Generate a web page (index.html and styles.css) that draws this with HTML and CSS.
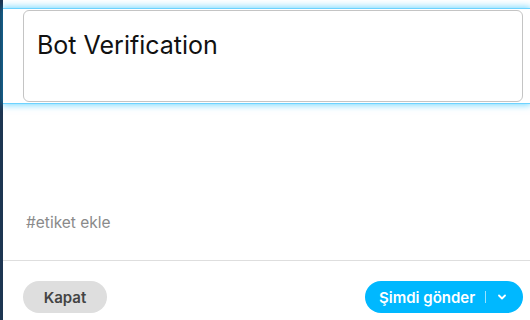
FILE: index.html
```html
<!DOCTYPE html>
<html lang="tr">
<head>
<meta charset="utf-8">
<link rel="stylesheet" href="styles.css">
</head>
<body>
<div class="strip"></div>
<div class="panel">
  <div class="focus-band">
    <div class="title-box">Bot Verification</div>
  </div>
  <div class="body-space"></div>
  <div class="tags">#etiket ekle</div>
  <div class="footer">
    <button class="btn btn-close">Kapat</button>
    <button class="btn btn-post">
      <span class="post-label">Şimdi gönder</span>
      <span class="sep"></span>
      <svg class="chev" width="8" height="6" viewBox="0 0 8 6"><path d="M1 1.5 L4 4.5 L7 1.5" fill="none" stroke="#fff" stroke-width="1.8" stroke-linecap="round" stroke-linejoin="round"/></svg>
    </button>
  </div>
</div>
</body>
</html>
```
FILE: styles.css
```css
html, body {
  margin: 0;
  padding: 0;
  width: 530px;
  height: 320px;
  overflow: hidden;
  background: #fff;
}
body {
  display: flex;
  font-family: Inter, "Noto Sans", sans-serif;
}
.strip {
  width: 3px;
  flex: none;
  background: #1d3551;
}
.panel {
  flex: 1;
  display: flex;
  flex-direction: column;
  background: #fff;
}
.focus-band {
  margin-top: 8px;
  border-top: 1px solid #6dd3ff;
  border-bottom: 1px solid #6dd3ff;
  box-shadow: 0 0 7px 1px rgba(0, 184, 255, 0.55);
  padding: 1px 7px 1px 20px;
  background: #fff;
}
.title-box {
  border: 1px solid #c4c4c4;
  border-radius: 6px;
  padding: 16px 13px 0;
  height: 74px;
  font-size: 25px;
  color: #111;
  line-height: 36px;
}
.body-space {
  height: 109px;
}
.tags {
  padding-left: 23px;
  font-size: 15.5px;
  color: #8a8a8a;
  line-height: 20px;
  height: 47px;
  border-bottom: 1px solid #dedede;
}
.footer {
  display: flex;
  justify-content: space-between;
  padding: 20px 7px 0 20px;
}
.btn {
  border: none;
  height: 32px;
  border-radius: 16px;
  font-family: inherit;
  font-size: 15px;
  font-weight: 600;
  display: flex;
  align-items: center;
  padding: 0;
}
.btn-close {
  width: 84px;
  justify-content: center;
  background: #dedede;
  color: #444;
}
.btn-post {
  width: 158px;
  background: #00b8ff;
  color: #fff;
  padding-left: 14px;
}
.sep {
  width: 1px;
  height: 12px;
  background: rgba(255, 255, 255, 0.6);
  margin-left: 10px;
}
.chev {
  margin-left: 12px;
}
```
